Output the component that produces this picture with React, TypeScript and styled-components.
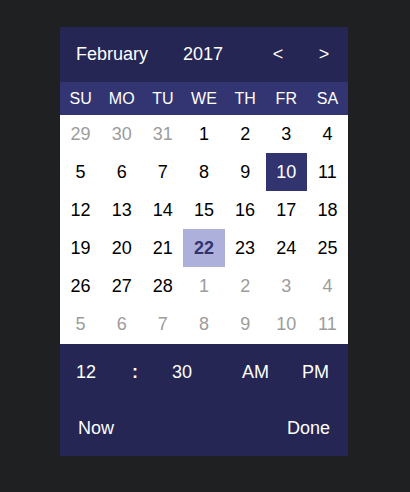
import React from "react";
import styled, { createGlobalStyle } from "styled-components";

const Global = createGlobalStyle`
  html, body { margin: 0; padding: 0; background: #1f2021; }
  body { font-family: "Liberation Sans", Arial, sans-serif; }
`;

const Page = styled.div`
  width: 410px;
  height: 492px;
  padding-top: 27px;
  box-sizing: border-box;
  display: flex;
  justify-content: flex-start;
  padding-left: 60px;
`;

const Picker = styled.div`
  width: 288px;
  display: flex;
  flex-direction: column;
  color: #fff;
  font-size: 18px;
`;

const Header = styled.div`
  height: 55px;
  background: #252654;
  display: flex;
  align-items: center;
  padding-left: 16px;
  padding-right: 1px;
`;

const Month = styled.span`
  width: 107px;
`;

const Year = styled.span`
  flex: 1;
`;

const NavButton = styled.span`
  width: 46px;
  text-align: center;
`;

const WeekRow = styled.div`
  height: 33px;
  background: #333572;
  display: grid;
  grid-template-columns: repeat(7, 1fr);
  align-items: center;
  font-size: 16px;
`;

const WeekDay = styled.span`
  text-align: center;
`;

const Days = styled.div`
  background: #fff;
  display: grid;
  grid-template-columns: repeat(7, 1fr);
  grid-auto-rows: 38px;
  padding-bottom: 1px;
`;

type Kind = "other" | "normal" | "selected" | "today";

const Day = styled.span<{ $kind: Kind }>`
  display: flex;
  align-items: center;
  justify-content: center;
  color: ${(p) =>
    p.$kind === "other" ? "#9c9c9c" : p.$kind === "selected" ? "#fff" : p.$kind === "today" ? "#323470" : "#000"};
  background: ${(p) => (p.$kind === "selected" ? "#323470" : p.$kind === "today" ? "#aeb0dc" : "transparent")};
  font-weight: ${(p) => (p.$kind === "today" ? 700 : 400)};
`;

const Footer = styled.div`
  background: #252654;
  display: flex;
  flex-direction: column;
`;

const TimeRow = styled.div`
  height: 56px;
  display: grid;
  grid-template-columns: 56px 40px 70px 60px auto;
  align-items: center;
  padding-left: 16px;
`;

const Colon = styled.span`
  font-weight: 700;
`;

const ActionRow = styled.div`
  height: 56px;
  display: flex;
  align-items: center;
  justify-content: space-between;
  padding: 0 18px;
`;

const weekDays = ["SU", "MO", "TU", "WE", "TH", "FR", "SA"];

const days: { n: number; k: Kind }[] = [
  ...[29, 30, 31].map((n) => ({ n, k: "other" as Kind })),
  ...Array.from({ length: 28 }, (_, i) => ({
    n: i + 1,
    k: (i + 1 === 10 ? "selected" : i + 1 === 22 ? "today" : "normal") as Kind,
  })),
  ...Array.from({ length: 11 }, (_, i) => ({ n: i + 1, k: "other" as Kind })),
];

export default function App() {
  return (
    <>
      <Global />
      <Page>
        <Picker>
          <Header>
            <Month>February</Month>
            <Year>2017</Year>
            <NavButton>&lt;</NavButton>
            <NavButton>&gt;</NavButton>
          </Header>
          <WeekRow>
            {weekDays.map((d) => (
              <WeekDay key={d}>{d}</WeekDay>
            ))}
          </WeekRow>
          <Days>
            {days.map((d, i) => (
              <Day key={i} $kind={d.k}>
                {d.n}
              </Day>
            ))}
          </Days>
          <Footer>
            <TimeRow>
              <span>12</span>
              <Colon>:</Colon>
              <span>30</span>
              <span>AM</span>
              <span>PM</span>
            </TimeRow>
            <ActionRow>
              <span>Now</span>
              <span>Done</span>
            </ActionRow>
          </Footer>
        </Picker>
      </Page>
    </>
  );
}
